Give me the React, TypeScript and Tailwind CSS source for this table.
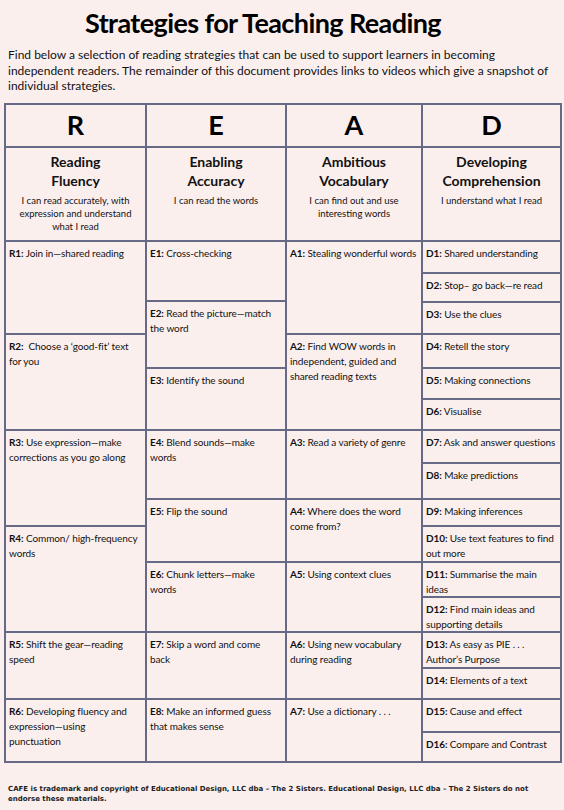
type Cell = { h: number; label: string; text: string };
type Col = { letter: string; title: string[]; desc: string; cells: Cell[] };

const cols: Col[] = [
  {
    letter: "R",
    title: ["Reading", "Fluency"],
    desc: "I can read accurately, with\nexpression and understand\nwhat I read",
    cells: [
      { h: 91, label: "R1:", text: "Join in—shared reading" },
      { h: 94, label: "R2:", text: "\u00a0Choose a ‘good-fit’ text\nfor you" },
      { h: 94, label: "R3:", text: "Use expression—make\ncorrections as you go along" },
      { h: 104, label: "R4:", text: "Common/ high-frequency\nwords" },
      { h: 65, label: "R5:", text: "Shift the gear—reading\nspeed" },
      { h: 61, label: "R6:", text: "Developing fluency and\nexpression—using\npunctuation" },
    ],
  },
  {
    letter: "E",
    title: ["Enabling", "Accuracy"],
    desc: "I can read the words",
    cells: [
      { h: 58, label: "E1:", text: "Cross-checking" },
      { h: 65, label: "E2:", text: "Read the picture—match\nthe word" },
      { h: 60, label: "E3:", text: "Identify the sound" },
      { h: 67, label: "E4:", text: "Blend sounds—make\nwords" },
      { h: 61, label: "E5:", text: "Flip the sound" },
      { h: 68, label: "E6:", text: "Chunk letters—make\nwords" },
      { h: 65, label: "E7:", text: "Skip a word and come\nback" },
      { h: 61, label: "E8:", text: "Make an informed guess\nthat makes sense" },
    ],
  },
  {
    letter: "A",
    title: ["Ambitious", "Vocabulary"],
    desc: "I can find out and use\ninteresting words",
    cells: [
      { h: 91, label: "A1:", text: "Stealing wonderful words" },
      { h: 94, label: "A2:", text: "Find WOW words in\nindependent, guided and\nshared reading texts" },
      { h: 67, label: "A3:", text: "Read a variety of genre" },
      { h: 61, label: "A4:", text: "Where does the word\ncome from?" },
      { h: 68, label: "A5:", text: "Using context clues" },
      { h: 65, label: "A6:", text: "Using new vocabulary\nduring reading" },
      { h: 61, label: "A7:", text: "Use a dictionary . . ." },
    ],
  },
  {
    letter: "D",
    title: ["Developing", "Comprehension"],
    desc: "I understand what I read",
    cells: [
      { h: 30, label: "D1:", text: "Shared understanding" },
      { h: 27, label: "D2:", text: "Stop– go back—re read" },
      { h: 30, label: "D3:", text: "Use the clues" },
      { h: 32, label: "D4:", text: "Retell the story" },
      { h: 29, label: "D5:", text: "Making connections" },
      { h: 29, label: "D6:", text: "Visualise" },
      { h: 31, label: "D7:", text: "Ask and answer questions" },
      { h: 34, label: "D8:", text: "Make predictions" },
      { h: 25, label: "D9:", text: "Making inferences" },
      { h: 34, label: "D10:", text: "Use text features to find\nout more" },
      { h: 33, label: "D11:", text: "Summarise the main\nideas" },
      { h: 33, label: "D12:", text: "Find main ideas and\nsupporting details" },
      { h: 34, label: "D13:", text: "As easy as PIE . . .\nAuthor’s Purpose" },
      { h: 29, label: "D14:", text: "Elements of a text" },
      { h: 31, label: "D15:", text: "Cause and effect" },
      { h: 28, label: "D16:", text: "Compare and Contrast" },
    ],
  },
];

export default function App() {
  return (
    <main className="min-h-[810px] w-[564px] bg-[#fbefee] font-['Lato',sans-serif] text-[#111]">
      <h1 className="pr-[38px] pt-[6px] text-center text-[27px] font-bold leading-[34px] tracking-[-0.6px] text-black">
        Strategies for Teaching Reading
      </h1>
      <p className="mt-[7px] px-[8px] text-[12px] leading-[15.5px] text-[#111]">
        Find below a selection of reading strategies that can be used to support learners in becoming
        independent readers. The remainder of this document provides links to videos which give a snapshot
        of individual strategies.
      </p>

      <div className="ml-[4px] mt-[9px] grid w-[558px] grid-cols-[139px_138px_134px_137px] gap-[2px] bg-[#676a87] p-[2px]">
        {cols.map((c) => (
          <div key={c.letter} className="flex flex-col gap-[2px]">
            <div className="flex h-[41px] items-center justify-center bg-[#fbefee] text-[27px] font-bold text-black">
              {c.letter}
            </div>
            <div className="flex h-[92px] flex-col items-center bg-[#fbefee] px-[2px] pt-[4px] text-center">
              <div className="text-[14px] font-bold leading-[19px]">
                {c.title.map((t) => (
                  <div key={t}>{t}</div>
                ))}
              </div>
              <p className="mt-[4px] whitespace-pre-line text-[9.5px] leading-[13px]">{c.desc}</p>
            </div>
            {c.cells.map((cell) => (
              <p
                key={cell.label}
                style={{ height: cell.h }}
                className="whitespace-pre-line bg-[#fbefee] pl-[3px] pt-[4px] text-[10px] leading-[15px] tracking-[-0.1px]"
              >
                <b>{cell.label}</b> {cell.text}
              </p>
            ))}
          </div>
        ))}
      </div>

      <p className="mt-[21px] px-[8px] font-['DejaVu_Sans',sans-serif] text-[7px] font-bold leading-[10px] text-[#222]">
        CAFE is trademark and copyright of Educational Design, LLC dba – The 2 Sisters. Educational Design, LLC dba – The 2 Sisters do not
        <br />
        endorse these materials.
      </p>
    </main>
  );
}
